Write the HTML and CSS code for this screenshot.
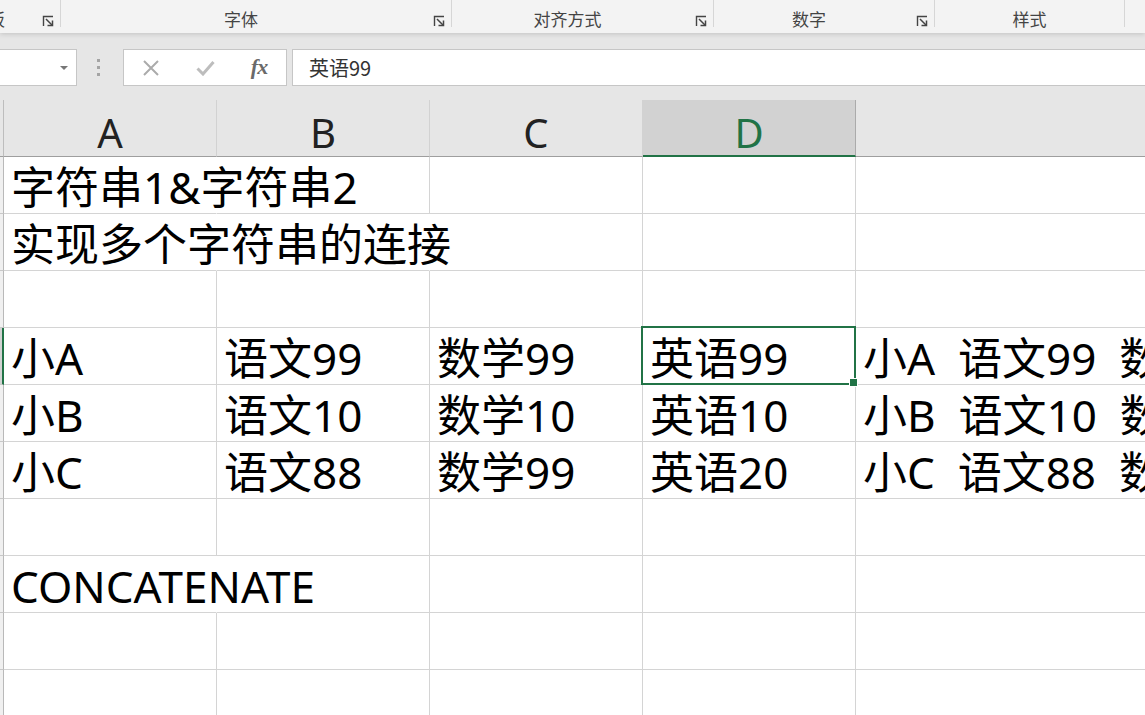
FILE: index.html
```html
<!DOCTYPE html>
<html lang="zh-CN">
<head>
<meta charset="utf-8">
<title>Excel</title>
<link rel="stylesheet" href="styles.css">
</head>
<body>
<div class="ribbon">
  <div class="grp g0"><span class="lbl">剪贴板</span><svg class="launch" viewBox="0 0 12 12"><path d="M1.5 11V1.5H11" fill="none" stroke="#444" stroke-width="1.4"/><path d="M4 4l6 6" stroke="#444" stroke-width="1.5"/><path d="M10.5 5.5v5h-5" fill="none" stroke="#444" stroke-width="1.5"/></svg></div>
  <div class="grp g1"><span class="lbl">字体</span><svg class="launch" viewBox="0 0 12 12"><path d="M1.5 11V1.5H11" fill="none" stroke="#444" stroke-width="1.4"/><path d="M4 4l6 6" stroke="#444" stroke-width="1.5"/><path d="M10.5 5.5v5h-5" fill="none" stroke="#444" stroke-width="1.5"/></svg></div>
  <div class="grp g2"><span class="lbl">对齐方式</span><svg class="launch" viewBox="0 0 12 12"><path d="M1.5 11V1.5H11" fill="none" stroke="#444" stroke-width="1.4"/><path d="M4 4l6 6" stroke="#444" stroke-width="1.5"/><path d="M10.5 5.5v5h-5" fill="none" stroke="#444" stroke-width="1.5"/></svg></div>
  <div class="grp g3"><span class="lbl">数字</span><svg class="launch" viewBox="0 0 12 12"><path d="M1.5 11V1.5H11" fill="none" stroke="#444" stroke-width="1.4"/><path d="M4 4l6 6" stroke="#444" stroke-width="1.5"/><path d="M10.5 5.5v5h-5" fill="none" stroke="#444" stroke-width="1.5"/></svg></div>
  <div class="grp g4"><span class="lbl">样式</span></div>
</div>
<div class="fbar">
  <div class="namebox"><span class="caret"></span></div>
  <div class="grip"><i></i><i></i><i></i></div>
  <div class="fbtns">
    <span class="fb"><svg width="18" height="16" viewBox="0 0 18 16"><path d="M2 1l14 14M16 1L2 15" stroke="#ababab" stroke-width="2" fill="none"/></svg></span>
    <span class="fb"><svg width="19" height="16" viewBox="0 0 19 16"><path d="M1.5 8.5l5.5 5.5L17.5 2" stroke="#bdbdbd" stroke-width="3" fill="none"/></svg></span>
    <span class="fb fx">fx</span>
  </div>
  <div class="finput">英语99</div>
</div>
<div class="sheet">
  <div class="corner"></div><div class="h">A</div><div class="h">B</div><div class="h">C</div><div class="h hsel">D</div><div class="h hlast"></div>

  <div class="r"></div><div class="c nr">字符串1&amp;字符串2</div><div class="c"></div><div class="c"></div><div class="c"></div><div class="c"></div>
  <div class="r"></div><div class="c nr">实现多个字符串的连接</div><div class="c nr"></div><div class="c"></div><div class="c"></div><div class="c"></div>
  <div class="r"></div><div class="c"></div><div class="c"></div><div class="c"></div><div class="c"></div><div class="c"></div>
  <div class="r rsel"></div><div class="c">小A</div><div class="c">语文99</div><div class="c">数学99</div><div class="c csel">英语99</div><div class="c">小A  语文99  数学99  英语99</div>
  <div class="r"></div><div class="c">小B</div><div class="c">语文10</div><div class="c">数学10</div><div class="c">英语10</div><div class="c">小B  语文10  数学10  英语10</div>
  <div class="r"></div><div class="c">小C</div><div class="c">语文88</div><div class="c">数学99</div><div class="c">英语20</div><div class="c">小C  语文88  数学99  英语20</div>
  <div class="r"></div><div class="c"></div><div class="c"></div><div class="c"></div><div class="c"></div><div class="c"></div>
  <div class="r"></div><div class="c nr">CONCATENATE</div><div class="c"></div><div class="c"></div><div class="c"></div><div class="c"></div>
  <div class="r"></div><div class="c"></div><div class="c"></div><div class="c"></div><div class="c"></div><div class="c"></div>
  <div class="r"></div><div class="c"></div><div class="c"></div><div class="c"></div><div class="c"></div><div class="c"></div>
</div>
</body>
</html>
```
FILE: styles.css
```css
* { box-sizing: border-box; margin: 0; padding: 0; }
html, body { width: 1145px; height: 715px; overflow: hidden; }
body { background: #e6e6e6; font-family: "Noto Sans CJK SC", sans-serif; }

.ribbon {
  height: 33px;
  background: #f3f3f3;
  display: flex;
  align-items: flex-start;
  box-shadow: 0 1px 5px rgba(0, 0, 0, 0.16);
  position: relative;
  z-index: 1;
}
.grp {
  flex: none;
  height: 27px;
  display: flex;
  align-items: flex-end;
  border-right: 1px solid #d6d6d6;
  padding-right: 6px;
}
.g0 { width: 61px; }
.g1 { width: 391px; }
.g2 { width: 262px; }
.g3 { width: 221px; }
.g4 { width: 190px; padding-right: 0; }
.lbl {
  flex: 1;
  min-width: 0;
  display: flex;
  justify-content: center;
  white-space: nowrap;
  font-size: 17px;
  line-height: 24px;
  margin-bottom: -4px;
  color: #444;
  padding-right: 12px;
}
.g0 .lbl { justify-content: flex-end; padding-right: 37px; overflow: hidden; }
.g4 .lbl { padding-right: 0; }
.launch { flex: none; width: 12px; height: 12px; }

.fbar {
  height: 67px;
  padding-top: 16px;
  display: flex;
  align-items: flex-start;
}
.namebox {
  flex: none;
  width: 77px;
  height: 37px;
  background: #fff;
  border: 1px solid #c6c6c6;
  border-left: 0;
  display: flex;
  justify-content: flex-end;
  align-items: center;
  padding-right: 8px;
}
.caret {
  width: 0;
  height: 0;
  border-left: 4px solid transparent;
  border-right: 4px solid transparent;
  border-top: 4px solid #777;
}
.grip {
  flex: none;
  margin-left: 20px;
  width: 4px;
  height: 37px;
  display: flex;
  flex-direction: column;
  justify-content: center;
  gap: 4px;
}
.grip i { display: block; width: 3px; height: 3px; background: #a4a4a4; }
.fbtns {
  flex: none;
  margin-left: 22px;
  width: 164px;
  height: 37px;
  background: #fff;
  border: 1px solid #c6c6c6;
  display: flex;
}
.fb {
  width: 54px;
  display: flex;
  align-items: center;
  justify-content: center;
}
.fx {
  font-family: "Liberation Serif", serif;
  font-style: italic;
  font-weight: bold;
  font-size: 22px;
  color: #6a6a6a;
  letter-spacing: -1px;
  padding-bottom: 2px;
}
.finput {
  flex: 1;
  margin-left: 5px;
  height: 37px;
  background: #fff;
  border: 1px solid #c6c6c6;
  border-right: 0;
  padding-left: 16px;
  font-size: 20px;
  line-height: 35px;
  color: #333;
}

.sheet {
  display: grid;
  grid-template-columns: 4px repeat(4, 213px) 700px;
  grid-auto-rows: 57px;
  background: #fff;
}
.corner {
  background: #e6e6e6;
  border-right: 1px solid #bdbdbd;
  border-bottom: 1px solid #9e9e9e;
}
.h {
  background: #e6e6e6;
  border-right: 1px solid #d2d2d2;
  border-bottom: 1px solid #9e9e9e;
  font-family: "Noto Sans", "Noto Sans CJK SC", sans-serif;
  font-size: 40px;
  line-height: 40px;
  padding-top: 13px;
  text-align: center;
  color: #222;
}
.hsel {
  background: #d2d2d2;
  color: #217346;
  border-right-color: #ababab;
  border-bottom: 2px solid #217346;
}
.hlast { border-right: 0; }
.r {
  background: #f0f0f0;
  border-right: 1px solid #b9b9b9;
  border-bottom: 1px solid #c8c8c8;
}
.rsel { background: #d2d2d2; border-right: 2px solid #217346; }
.c {
  border-right: 1px solid #d4d4d4;
  border-bottom: 1px solid #d4d4d4;
  font-family: "Noto Sans", "Noto Sans CJK SC", sans-serif;
  font-size: 44px;
  line-height: 44px;
  padding: 8px 0 0 7px;
  white-space: pre;
  color: #000;
}
.nr { border-right-color: transparent; }
.csel { position: relative; }
.csel::before {
  content: "";
  position: absolute;
  top: -2px;
  left: -2px;
  right: -1px;
  bottom: -1px;
  border: 2px solid #217346;
}
.csel::after {
  content: "";
  position: absolute;
  right: -3px;
  bottom: -3px;
  width: 7px;
  height: 7px;
  background: #217346;
  border: 1px solid #fff;
}
```
